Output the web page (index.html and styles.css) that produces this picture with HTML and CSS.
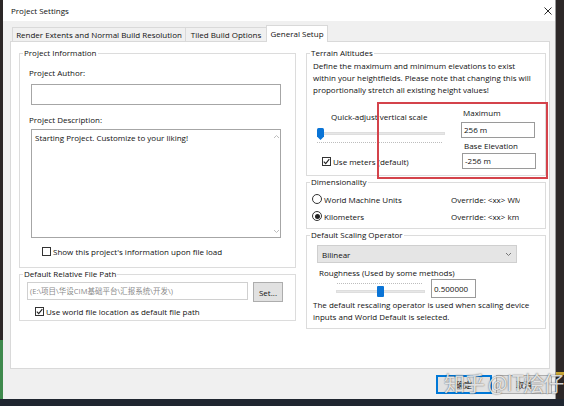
FILE: index.html
```html
<!DOCTYPE html>
<html lang="en">
<head>
<meta charset="utf-8">
<title>Project Settings</title>
<link rel="stylesheet" href="styles.css">
</head>
<body>
<div class="desk">
  <div class="edge-left"></div>
  <div class="window">
    <div class="titlebar">
      <span class="title">Project Settings</span>
      <svg class="close" width="8" height="8" viewBox="0 0 8 8"><path d="M0.5 0.5L7.5 7.5M7.5 0.5L0.5 7.5" stroke="#2a2a2a" stroke-width="1"/></svg>
    </div>
    <div class="tabs">
      <div class="tab t1">Render Extents and Normal Build Resolution</div>
      <div class="tab t2">Tiled Build Options</div>
      <div class="tab t3 sel">General Setup</div>
    </div>
    <div class="panel">
      <div class="col">
        <fieldset class="group g-info">
          <legend>Project Information</legend>
          <div class="lbl l-author">Project Author:</div>
          <div class="field author"></div>
          <div class="lbl l-desc">Project Description:</div>
          <div class="memo">
            <div class="memo-text">Starting Project. Customize to your liking!</div>
            <div class="vscroll">
              <svg width="7" height="5" viewBox="0 0 7 5"><path d="M1 4L3.5 1.5L6 4" fill="none" stroke="#bdbdbd" stroke-width="1"/></svg>
              <svg width="7" height="5" viewBox="0 0 7 5"><path d="M1 1L3.5 3.5L6 1" fill="none" stroke="#bdbdbd" stroke-width="1"/></svg>
            </div>
          </div>
          <div class="check-row show-info"><span class="cb"></span><span>Show this project's information upon file load</span></div>
        </fieldset>
        <fieldset class="group g-path">
          <legend>Default Relative File Path</legend>
          <div class="path-row">
            <div class="field path">(E:\项目\华设CIM基础平台\汇报系统\开发\)</div>
            <div class="btn set">Set...</div>
          </div>
          <div class="check-row use-world"><span class="cb"><svg width="7" height="7" viewBox="0 0 7 7"><path d="M0.8 3.6L2.7 5.6L6.3 1.2" fill="none" stroke="#222" stroke-width="1.1"/></svg></span><span>Use world file location as default file path</span></div>
        </fieldset>
      </div>
      <div class="col">
        <fieldset class="group g-terrain">
          <legend>Terrain Altitudes</legend>
          <div class="desc">Define the maximum and minimum elevations to exist<br>within your heightfields. Please note that changing this will<br>proportionally stretch all existing height values!</div>
          <div class="adjust">
            <div class="qa">
              <div class="lbl qa-lbl">Quick-adjust vertical scale</div>
              <div class="slider s-vert">
                <div class="track"></div>
                <svg class="thumb-down" width="7" height="12" viewBox="0 0 7 12"><path d="M0 1.5Q0 0 1.5 0H5.5Q7 0 7 1.5V8.5L3.5 12L0 8.5Z" fill="#0a74d6"/></svg>
                <div class="ticks"></div>
              </div>
              <div class="check-row meters"><span class="cb"><svg width="7" height="7" viewBox="0 0 7 7"><path d="M0.8 3.6L2.7 5.6L6.3 1.2" fill="none" stroke="#222" stroke-width="1.1"/></svg></span><span>Use meters (default)</span></div>
            </div>
            <div class="mm">
              <div class="lbl mm-max">Maximum</div>
              <div class="field num n-max">256 m</div>
              <div class="lbl mm-base">Base Elevation</div>
              <div class="field num n-base">-256 m</div>
            </div>
          </div>
        </fieldset>
        <fieldset class="group g-dim">
          <legend>Dimensionality</legend>
          <div class="radio-row r1">
            <span class="radio"></span><span class="rlabel">World Machine Units</span>
            <span class="override">Override: &lt;xx&gt; WM</span>
          </div>
          <div class="radio-row r2">
            <span class="radio on"></span><span class="rlabel">Kilometers</span>
            <span class="override">Override: &lt;xx&gt; km</span>
          </div>
        </fieldset>
        <fieldset class="group g-scale">
          <legend>Default Scaling Operator</legend>
          <div class="select"><span>Bilinear</span><svg width="7" height="5" viewBox="0 0 7 5"><path d="M1 1L3.5 3.5L6 1" fill="none" stroke="#777" stroke-width="1"/></svg></div>
          <div class="lbl rough-lbl">Roughness (Used by some methods)</div>
          <div class="rough-row">
            <div class="slider s-rough">
              <div class="ticks"></div>
              <div class="track"></div>
              <div class="thumb-rect"></div>
            </div>
            <div class="field num n-rough">0.500000</div>
          </div>
          <div class="desc scale-desc">The default rescaling operator is used when scaling device<br>inputs and World Default is selected.</div>
        </fieldset>
      </div>
    </div>
    <div class="footer">
      <div class="btn ok">确定</div>
      <div class="btn cancel">取消</div>
    </div>
    <div class="redbox"></div>
    <div class="watermark">知乎 @IT烩仔</div>
  </div>
  <div class="edge-right"><div class="stripe"></div></div>
</div>
</body>
</html>
```
FILE: styles.css
```css
* { box-sizing: border-box; }
html, body { margin: 0; padding: 0; }
body {
  width: 564px; height: 406px; overflow: hidden;
  background: #1f2630;
  font-family: "Open Sans", "Noto Sans CJK SC", sans-serif;
  font-size: 8px; color: #111;
}
.desk { display: flex; height: 399px; }
.edge-left { width: 3px; background: linear-gradient(#2c2727 0 340px, #3f8a4d 340px); }
.edge-right { flex: 1; background: #2d2828; display: flex; flex-direction: column; justify-content: flex-end; padding-bottom: 24px; }
.edge-right .stripe { height: 3px; background: #c9a634; }
.window {
  position: relative; width: 553px; height: 399px;
  background: #f0f0f0; display: flex; flex-direction: column;
  border-right: 1px solid #9a9a9a;
}
.titlebar {
  height: 21px; background: #fff; display: flex; align-items: center;
  justify-content: space-between; padding: 0 3px 0 8px;
}
.title { font-size: 8px; }
.tabs { height: 20px; display: flex; align-items: flex-end; padding-left: 9px; }
.tab {
  height: 14px; line-height: 13px; text-align: center;
  background: #f0f0f0; border: 1px solid #d9d9d9; border-bottom: none;
  white-space: nowrap; margin-right: -1px;
}
.t1 { width: 174px; }
.t2 { width: 82px; }
.t3 { width: 62px; }
.tab.sel {
  height: 17px; line-height: 15px; background: #fff; margin-bottom: -1px;
  position: relative; z-index: 1;
}
.panel {
  height: 328px; margin: 0 5px 0 7px; background: #fff; border: 1px solid #d9d9d9;
  display: grid; grid-template-columns: 277px 240px; column-gap: 10px;
  align-content: start; padding: 5px 0 0 8px;
}
.col { display: flex; flex-direction: column; }
fieldset.group { margin: 0; padding: 0; border: 1px solid #dcdcdc; min-width: 0; }
legend { margin-left: 3px; padding: 0 1px; line-height: 12px; height: 12px; white-space: nowrap; }
.lbl { line-height: 12px; white-space: nowrap; }
.field { border: 1px solid #a6a6a6; background: #fff; }
.g-info { height: 221px; }
.l-author { margin: 8px 0 0 9px; }
.author { margin: 5px 0 0 11px; width: 250px; height: 21px; }
.l-desc { margin: 9px 0 0 9px; }
.memo { margin: 3px 0 0 11px; width: 250px; height: 109px; border: 1px solid #a6a6a6; display: flex; }
.memo-text { flex: 1; padding: 2px 0 0 3px; line-height: 12px; }
.vscroll { width: 8px; display: flex; flex-direction: column; justify-content: space-between; align-items: center; padding: 4px 0 3px; }
.check-row { display: flex; align-items: center; height: 12px; white-space: nowrap; }
.cb { width: 9px; height: 9px; border: 1px solid #333; background: #fff; margin-right: 2px; display: flex; align-items: center; justify-content: center; }
.show-info { margin: 7px 0 0 22px; }
.g-path { height: 53px; margin-top: 11px; }
.path-row { display: flex; align-items: flex-start; margin: 2px 0 0 7px; }
.path { width: 221px; height: 18px; line-height: 16px; padding-left: 2px; color: #8a8a8a; border-color: #d0d0d0; font-size: 7.5px; white-space: nowrap; overflow: hidden; }
.btn { background: #e1e1e1; border: 1px solid #adadad; display: flex; align-items: center; justify-content: center; white-space: nowrap; }
.set { width: 30px; height: 20px; margin-left: 5px; }
.use-world { margin: 3px 0 0 15px; }
.g-terrain { height: 129px; }
.desc { line-height: 12px; margin: 1px 0 0 6px; white-space: nowrap; }
.adjust { display: flex; margin-top: 5px; }
.qa { width: 144px; margin-left: 10px; }
.qa-lbl { margin: 10px 0 0 14px; }
.slider { position: relative; }
.s-vert { height: 17px; margin-top: 5px; width: 128px; }
.s-vert .track { position: absolute; left: 0; right: 0; top: 4px; height: 3px; background: #e7e7e7; border: 1px solid #dedede; }
.thumb-down { position: absolute; left: 0; top: 0; }
.s-vert .ticks { position: absolute; left: 0; right: 2px; top: 14px; height: 1px; }
.ticks { background: repeating-linear-gradient(90deg, #bdbdbd 0 1px, transparent 1px 2px); }
.meters { margin: 10px 0 0 5px; }
.mm { display: flex; flex-direction: column; align-items: flex-start; }
.mm-max { margin: 6px 0 0 2px; }
.num { height: 16px; width: 74px; line-height: 14px; padding-left: 2px; border-color: #9a9a9a; }
.n-max { margin-top: 3px; }
.mm-base { margin: 2px 0 0 3px; }
.n-base { margin: 1px 0 0 1px; }
.g-dim { height: 53px; }
.radio-row { display: flex; align-items: center; height: 12px; margin-left: 5px; white-space: nowrap; }
.r1 { margin-top: 5px; }
.r2 { margin-top: 5px; }
.radio { width: 10px; height: 10px; border: 1px solid #333; border-radius: 50%; background: #fff; margin-right: 2px; display: flex; align-items: center; justify-content: center; }
.radio.on::after { content: ""; width: 5px; height: 5px; border-radius: 50%; background: #222; }
.rlabel { width: 127px; }
.override { width: 69px; overflow: hidden; }
.g-scale { height: 100px; margin-top: 4px; }
.select { margin: 4px 0 0 10px; width: 200px; height: 18px; background: #e5e5e5; border: 1px solid #cfcfcf; display: flex; align-items: center; justify-content: space-between; padding: 0 4px 0 4px; }
.rough-lbl { margin: 4px 0 0 12px; }
.rough-row { display: flex; margin: 0 0 0 29px; }
.s-rough { width: 89px; height: 19px; }
.s-rough .ticks { position: absolute; left: 1px; right: 2px; top: 4px; height: 1px; }
.s-rough .track { position: absolute; left: 0; right: 0; top: 11px; height: 3px; background: #e7e7e7; border: 1px solid #dedede; }
.thumb-rect { position: absolute; left: 41px; top: 7px; width: 7px; height: 11px; background: #0a74d6; border-radius: 1px; }
.n-rough { margin-left: 6px; width: 45px; height: 19px; line-height: 17px; }
.scale-desc { margin: 1px 0 0 6px; }
.footer { flex: 1; display: flex; justify-content: flex-end; align-items: flex-start; padding: 6px 3px 0 0; gap: 4px; }
.ok, .cancel { width: 56px; height: 19px; font-size: 8px; }
.ok { border: 1px solid #0078d7; box-shadow: inset 0 0 0 1px #0078d7; }
.redbox { position: absolute; left: 374px; top: 102px; width: 171px; height: 77px; border: 2px solid #d4434b; pointer-events: none; }
.watermark {
  position: absolute; left: 441px; top: 369px; font-size: 21px; line-height: 26px;
  font-family: "Noto Sans CJK SC", sans-serif; color: rgba(255,255,255,0.82);
  text-shadow: 0 0 1px rgba(0,0,0,0.5), 0 0 2px rgba(0,0,0,0.3); white-space: nowrap; letter-spacing: -1px;
}
```
